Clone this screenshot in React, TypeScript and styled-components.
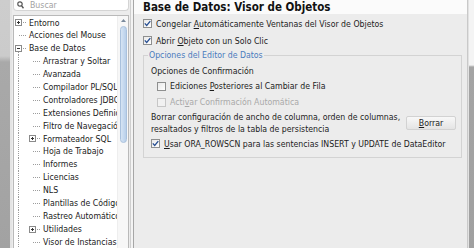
import React from 'react';
import styled, { createGlobalStyle } from 'styled-components';

const Global = createGlobalStyle`
  html, body { margin: 0; padding: 0; background: #ececec; }
  body {
    font-family: "DejaVu Sans Condensed", "DejaVu Sans", sans-serif;
    font-size: 8.7px;
    color: #1c1c1c;
  }
  #root { width: 474px; height: 248px; }
`;

const Frame = styled.div`
  display: flex;
  width: 474px;
  height: 248px;
  overflow: hidden;
`;

const LeftGutter = styled.div`
  flex: none;
  width: 10px;
  border-right: 2px solid #e4e4e4;
  background: linear-gradient(to bottom, #cdcdcd 0, #cbcbcb 56px, #a9a9a9 62px, #a2a2a2 100%);
`;

const LeftPanel = styled.div`
  flex: none;
  width: 118px;
  display: flex;
  flex-direction: column;
  padding: 0 1px 0 1px;
  box-sizing: border-box;
  background: #ececec;
`;

const SearchField = styled.div`
  flex: none;
  height: 11px;
  display: flex;
  align-items: center;
  gap: 6px;
  padding-left: 3px;
  background: #fff;
  border: 1px solid #d4d4d4;
  border-top: none;
  border-radius: 0 0 4px 4px;
  color: #a2a2a2;
  margin-top: -1px;
`;

const TreeBox = styled.div`
  flex: 1;
  margin-top: 4px;
  display: flex;
  background: #fff;
  border: 1px solid #b9b9b9;
  border-bottom: none;
  min-height: 0;
`;

const TreeList = styled.div`
  flex: 1;
  overflow: hidden;
  padding-top: 0.5px;
  min-width: 0;
`;

const TreeRow = styled.div`
  display: flex;
  align-items: stretch;
  height: 12.9px;
  white-space: nowrap;
`;

const Indent = styled.span<{ $line?: boolean }>`
  flex: none;
  width: 14px;
  background: ${p => p.$line ? 'repeating-linear-gradient(to bottom, #9c9c9c 0 1px, transparent 1px 2px) no-repeat 4px 0 / 1px 100%' : 'none'};
`;

const Joint = styled.span<{ $down?: boolean }>`
  flex: none;
  width: 14px;
  display: flex;
  align-items: center;
  background:
    repeating-linear-gradient(to right, #9c9c9c 0 1px, transparent 1px 2px) no-repeat 5px 50% / 8px 1px
    ${p => p.$down ? ', repeating-linear-gradient(to bottom, #9c9c9c 0 1px, transparent 1px 2px) no-repeat 4px 8px / 1px 100%' : ''};
`;

const ExpanderBox = styled.svg`
  margin-left: 1px;
  display: block;
`;

const TreeLabel = styled.span`
  margin-left: 1px;
  line-height: 12.9px;
  color: #1a1a1a;
`;

const ScrollBar = styled.div`
  flex: none;
  width: 10px;
  display: flex;
  flex-direction: column;
  align-items: center;
  background: #f7f7f7;
  border-left: 1px solid #eeeeee;
`;

const ArrowUp = styled.svg`
  margin-top: 3px;
  display: block;
`;

const Thumb = styled.div`
  margin-top: 4px;
  width: 7px;
  height: 117px;
  border-radius: 4px;
  border: 1px solid #a9c1dd;
  background: linear-gradient(to right, #d6e4f3, #c4d8ef 60%, #b9cfe8);
  box-sizing: border-box;
`;

const Splitter = styled.div`
  flex: none;
  width: 4px;
  box-sizing: border-box;
  background: #f3f3f3;
  border-left: 1px solid #cfcfcf;
  border-right: 1px solid #a6a6a6;
`;

const RightPanel = styled.div`
  flex: none;
  width: 334px;
  display: flex;
  flex-direction: column;
  background: #ececec;
  border-right: 1px solid #c9c9c9;
  box-sizing: border-box;
`;

const Header = styled.div`
  flex: none;
  height: 14px;
  background: #fbfbfb;
  display: flex;
  align-items: center;
  padding-left: 9px;
`;

const Title = styled.span`
  font-family: "DejaVu Sans Condensed", "DejaVu Sans", sans-serif;
  font-weight: bold;
  font-size: 11.5px;
  color: #111;
  margin-top: -1px;
`;

const Body = styled.div`
  display: flex;
  flex-direction: column;
  padding: 1px 5px 0 9px;
`;

const CheckRow = styled.label<{ $h?: number; $indent?: number; $disabled?: boolean }>`
  display: flex;
  align-items: center;
  gap: 4px;
  height: ${p => p.$h ?? 17}px;
  padding-left: ${p => p.$indent ?? 0}px;
  color: ${p => p.$disabled ? '#a9a9a9' : '#1c1c1c'};
  white-space: nowrap;
`;

const Box = styled.span<{ $disabled?: boolean }>`
  flex: none;
  width: 9px;
  height: 9px;
  box-sizing: border-box;
  border: 1px solid ${p => p.$disabled ? '#c6c6c6' : '#8e8f8f'};
  background: ${p => p.$disabled ? '#f1f1f1' : 'linear-gradient(135deg, #e9e9e9, #ffffff)'};
  display: flex;
  align-items: center;
  justify-content: center;
`;

const Group = styled.div`
  position: relative;
  margin-top: 6px;
  border: 1px solid #d3d3d3;
  padding: 8px 0 5px 7px;
  display: flex;
  flex-direction: column;
`;

const Legend = styled.span`
  position: absolute;
  top: -7px;
  left: 4px;
  padding: 0 1px;
  background: #ececec;
  color: #4b7bbd;
  line-height: 12px;
`;

const SubHeading = styled.div`
  height: 14px;
  display: flex;
  align-items: center;
`;

const ParaRow = styled.div`
  display: flex;
  align-items: center;
  justify-content: space-between;
  padding-right: 5px;
  margin-top: 1px;
`;

const Para = styled.div`
  line-height: 12px;
  white-space: nowrap;
`;

const Button = styled.button`
  font-family: inherit;
  font-size: 8.7px;
  color: #1c1c1c;
  width: 50px;
  height: 14px;
  padding: 0;
  border: 1px solid #d2d2d2;
  border-radius: 2px;
  background: linear-gradient(to bottom, #f8f8f8, #e4e4e4);
`;

const U = styled.span`
  text-decoration: underline;
`;

const RightGutter = styled.div`
  flex: 1;
  background: linear-gradient(to bottom, #f4f4f4 0, #f4f4f4 65px, #a4a4a4 67px, #a0a0a0 100%);
  border-left: 1px solid #e2e2e2;
`;

type Item = { label: string; level: number; exp?: 'plus' | 'minus'; down?: boolean };

const items: Item[] = [
  { label: 'Entorno', level: 0, exp: 'plus' },
  { label: 'Acciones del Mouse', level: 0 },
  { label: 'Base de Datos', level: 0, exp: 'minus', down: true },
  { label: 'Arrastrar y Soltar', level: 1 },
  { label: 'Avanzada', level: 1 },
  { label: 'Compilador PL/SQL', level: 1 },
  { label: 'Controladores JDBC', level: 1 },
  { label: 'Extensiones Definidas por el Usuario', level: 1 },
  { label: 'Filtro de Navegación', level: 1 },
  { label: 'Formateador SQL', level: 1, exp: 'plus' },
  { label: 'Hoja de Trabajo', level: 1 },
  { label: 'Informes', level: 1 },
  { label: 'Licencias', level: 1 },
  { label: 'NLS', level: 1 },
  { label: 'Plantillas de Código', level: 1 },
  { label: 'Rastreo Automático', level: 1 },
  { label: 'Utilidades', level: 1, exp: 'plus' },
  { label: 'Visor de Instancias', level: 1 },
];

const Expander = ({ kind }: { kind: 'plus' | 'minus' }) => (
  <ExpanderBox width="7" height="7" viewBox="0 0 7 7">
    <rect x="0.5" y="0.5" width="6" height="6" fill="#fff" stroke="#8a8a8a" />
    <line x1="2" y1="3.5" x2="5" y2="3.5" stroke="#333" />
    {kind === 'plus' && <line x1="3.5" y1="2" x2="3.5" y2="5" stroke="#333" />}
  </ExpanderBox>
);

const Check = ({ checked, disabled }: { checked?: boolean; disabled?: boolean }) => (
  <Box $disabled={disabled}>
    {checked && (
      <svg width="7" height="7" viewBox="0 0 7 7">
        <path d="M0.8 3.4 L2.7 5.4 L6.3 1.1" fill="none" stroke="#264e92" strokeWidth="1.3" />
      </svg>
    )}
  </Box>
);

export default function App() {
  return (
    <Frame>
      <Global />
      <LeftGutter />
      <LeftPanel>
        <SearchField>
          <svg width="7" height="8" viewBox="0 0 7 8">
            <circle cx="3" cy="3" r="2.2" fill="none" stroke="#555" strokeWidth="1.2" />
            <line x1="4.6" y1="4.8" x2="6.5" y2="7.2" stroke="#555" strokeWidth="1.4" />
          </svg>
          <span>Buscar</span>
        </SearchField>
        <TreeBox>
          <TreeList>
            {items.map(it => (
              <TreeRow key={it.label}>
                {it.level === 1 && <Indent $line />}
                <Joint $down={it.down}>{it.exp && <Expander kind={it.exp} />}</Joint>
                <TreeLabel>{it.label}</TreeLabel>
              </TreeRow>
            ))}
          </TreeList>
          <ScrollBar>
            <ArrowUp width="5" height="3" viewBox="0 0 5 3">
              <path d="M0 3 L2.5 0 L5 3 Z" fill="#7a8a9c" />
            </ArrowUp>
            <Thumb />
          </ScrollBar>
        </TreeBox>
      </LeftPanel>
      <Splitter />
      <RightPanel>
        <Header>
          <Title>Base de Datos: Visor de Objetos</Title>
        </Header>
        <Body>
          <CheckRow>
            <Check checked />
            <span>Congelar <U>A</U>utomáticamente Ventanas del Visor de Objetos</span>
          </CheckRow>
          <CheckRow>
            <Check checked />
            <span>Abrir <U>O</U>bjeto con un Solo Clic</span>
          </CheckRow>
          <Group>
            <Legend>Opciones del Editor de Datos</Legend>
            <SubHeading>Opciones de Confirmación</SubHeading>
            <CheckRow $h={16} $indent={6}>
              <Check />
              <span>Ediciones <U>P</U>osteriores al Cambiar de Fila</span>
            </CheckRow>
            <CheckRow $h={16} $indent={6} $disabled>
              <Check disabled />
              <span>Acti<U>v</U>ar Confirmación Automática</span>
            </CheckRow>
            <ParaRow>
              <Para>
                Borrar configuración de ancho de columna, orden de columnas,
                <br />
                resaltados y filtros de la tabla de persistencia
              </Para>
              <Button><U>B</U>orrar</Button>
            </ParaRow>
            <CheckRow $h={17} $indent={0}>
              <Check checked />
              <span><U>U</U>sar ORA_ROWSCN para las sentencias INSERT y UPDATE de DataEditor</span>
            </CheckRow>
          </Group>
        </Body>
      </RightPanel>
      <RightGutter />
    </Frame>
  );
}
